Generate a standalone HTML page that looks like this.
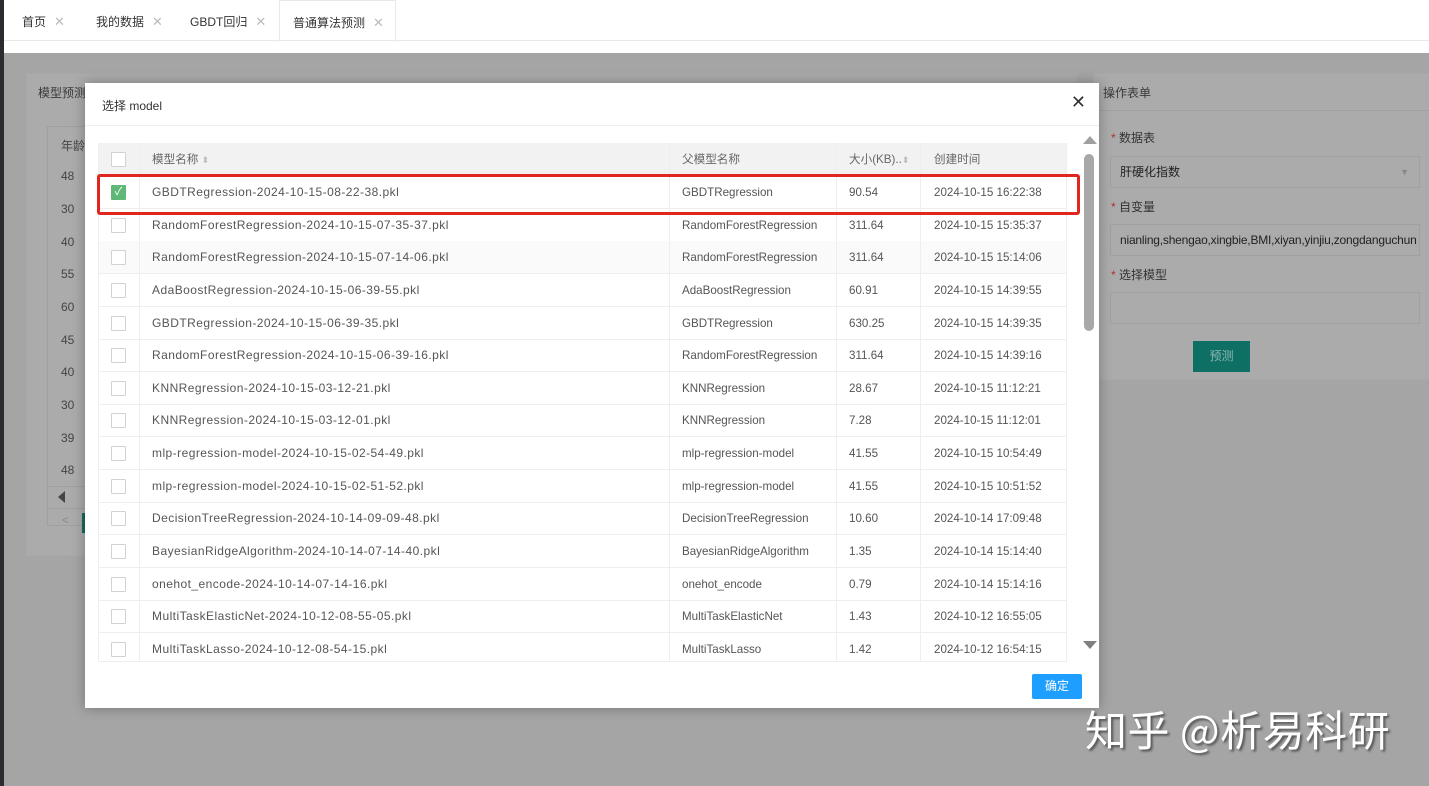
<!DOCTYPE html>
<html><head><meta charset="utf-8"><style>
*{margin:0;padding:0;box-sizing:border-box}
body{width:1429px;height:786px;overflow:hidden;position:relative;background:#a5a5a5;font-family:"Liberation Sans","Noto Sans CJK SC",sans-serif;font-size:12px;color:#666}
.a{position:absolute}
.top{left:0;top:0;width:1429px;height:53px;background:#fff}
.tabs{left:0;top:0;width:1429px;height:41px;border-bottom:1px solid #e8e8e8;background:#fff}
.tab{position:absolute;top:0;height:41px;line-height:44px;font-size:12px;color:#333}
.tab i{font-style:normal;color:#bbb;margin-left:8px;font-size:13px}
.strip{left:0;top:0;width:5px;height:786px;background:#2b2b30}
.card{background:#ababab;border:1px solid #a8a8a8}
.dlg{left:85px;top:83px;width:1014px;height:625px;background:#fff;box-shadow:0 0 12px rgba(0,0,0,.3)}
.row{position:absolute;left:98px;width:969px;height:33px;border-bottom:1px solid #eee;font-size:11.6px;color:#555}
.row span{position:absolute;top:0;line-height:33px;white-space:nowrap}
.row span.n{letter-spacing:0.45px;font-size:12px}
.cb{position:absolute;left:13px;top:9px;width:15px;height:15px;border:1px solid #d2d2d2;background:#fff;border-radius:1px}
.vl{position:absolute;top:143px;width:1px;height:519px;background:#eee}
</style></head><body>
<div class="a top"></div>
<div class="a tabs">
<div class="tab" style="left:22px">首页<i>✕</i></div>
<div class="tab" style="left:96px">我的数据<i>✕</i></div>
<div class="tab" style="left:190px">GBDT回归<i>✕</i></div>
<div class="tab" style="left:279px;width:117px;border:1px solid #e8e8e8;border-bottom:1px solid #fff;padding-left:13px;height:42px">普通算法预测<i>✕</i></div>
</div>
<div class="a" style="left:5px;top:53px;width:1424px;height:733px;background:#a5a5a5"></div>
<div class="a card" style="left:26px;top:73px;width:1051px;height:483px">
<div class="a" style="left:11px;top:10px;color:#3a3a3a">模型预测</div>
<div class="a" style="left:20px;top:52px;width:60px;height:400px;border:1px solid #9f9f9f;color:#444">
<div style="position:absolute;left:13px;top:10px">年龄</div>
<div style="position:absolute;left:13px;top:42px">48</div><div style="position:absolute;left:13px;top:75px">30</div><div style="position:absolute;left:13px;top:108px">40</div><div style="position:absolute;left:13px;top:140px">55</div><div style="position:absolute;left:13px;top:173px">60</div><div style="position:absolute;left:13px;top:206px">45</div><div style="position:absolute;left:13px;top:238px">40</div><div style="position:absolute;left:13px;top:271px">30</div><div style="position:absolute;left:13px;top:304px">39</div><div style="position:absolute;left:13px;top:336px">48</div>
<div style="position:absolute;left:0;top:359px;width:58px;height:1px;background:#9f9f9f"></div>
<div style="position:absolute;left:10px;top:364px;width:0;height:0;border-top:6px solid transparent;border-bottom:6px solid transparent;border-right:7px solid #444"></div>
<div style="position:absolute;left:0;top:381px;width:58px;height:1px;background:#9f9f9f"></div>
<div style="position:absolute;left:14px;top:386px;color:#888">&lt;</div>
<div style="position:absolute;left:34px;top:386px;width:6px;height:20px;background:#1a6a5e"></div>
</div>
</div>
<div class="a card" style="left:1093px;top:73px;width:340px;height:307px">
<div class="a" style="left:9px;top:10px;color:#3a3a3a">操作表单</div>
<div class="a" style="left:0;top:36px;width:340px;height:1px;background:#a0a0a0"></div>
<div class="a" style="left:17px;top:55px;color:#333"><span style="color:#b03030">*</span> 数据表</div>
<div class="a" style="left:16px;top:82px;width:310px;height:32px;border:1px solid #a0a0a0;line-height:30px;padding-left:9px;color:#222">肝硬化指数<span style="position:absolute;right:10px;top:0;color:#888;font-size:9px">▼</span></div>
<div class="a" style="left:17px;top:124px;color:#333"><span style="color:#b03030">*</span> 自变量</div>
<div class="a" style="left:16px;top:150px;width:310px;height:32px;border:1px solid #a0a0a0;line-height:30px;padding-left:9px;color:#222;overflow:hidden;white-space:nowrap;letter-spacing:-0.2px">nianling,shengao,xingbie,BMI,xiyan,yinjiu,zongdanguchun</div>
<div class="a" style="left:17px;top:192px;color:#333"><span style="color:#b03030">*</span> 选择模型</div>
<div class="a" style="left:16px;top:218px;width:310px;height:32px;border:1px solid #a0a0a0"></div>
<div class="a" style="left:99px;top:267px;width:57px;height:31px;background:#0e6f64;color:#8fb9b2;text-align:center;line-height:31px">预测</div>
</div>
<div class="a" style="left:0;top:645px;width:4px;height:55px;background:#18a892"></div>
<div class="a strip" style="width:4px"></div>

<div class="a dlg">
<div class="a" style="left:17px;top:14px;font-size:12px;color:#333">选择 model</div>
<div class="a" style="right:13px;top:9px;font-size:18px;color:#333">✕</div>
<div class="a" style="left:0;top:42px;width:1014px;height:1px;background:#eee"></div>
<div class="a" style="left:998px;top:53px;width:0;height:0;border-left:7px solid transparent;border-right:7px solid transparent;border-bottom:8px solid #a0a0a0"></div>
<div class="a" style="left:999px;top:71px;width:10px;height:177px;background:#a8a8a8;border-radius:5px"></div>
<div class="a" style="left:998px;top:558px;width:0;height:0;border-left:7px solid transparent;border-right:7px solid transparent;border-top:8px solid #808080"></div>
<div class="a" style="left:947px;top:591px;width:50px;height:25px;background:#1e9fff;color:#fff;text-align:center;line-height:25px;border-radius:2px">确定</div>
</div>

<div class="a" style="left:98px;top:143px;width:969px;height:33px;background:#f2f2f2;border:1px solid #eee"></div>
<div class="row" style="top:143px;background:#f2f2f2;color:#666"><div class="cb"></div><span style="left:54px">模型名称 <span style="position:relative;color:#bbb;font-size:9px;left:0">⬍</span></span><span style="left:584px">父模型名称</span><span style="left:751px">大小(KB)..<span style="position:relative;color:#bbb;font-size:9px">⬍</span></span><span style="left:836px">创建时间</span></div>
<div id="rows"></div>
<script>
var d=[["GBDTRegression-2024-10-15-08-22-38.pkl","GBDTRegression","90.54","2024-10-15 16:22:38"],
["RandomForestRegression-2024-10-15-07-35-37.pkl","RandomForestRegression","311.64","2024-10-15 15:35:37"],
["RandomForestRegression-2024-10-15-07-14-06.pkl","RandomForestRegression","311.64","2024-10-15 15:14:06"],
["AdaBoostRegression-2024-10-15-06-39-55.pkl","AdaBoostRegression","60.91","2024-10-15 14:39:55"],
["GBDTRegression-2024-10-15-06-39-35.pkl","GBDTRegression","630.25","2024-10-15 14:39:35"],
["RandomForestRegression-2024-10-15-06-39-16.pkl","RandomForestRegression","311.64","2024-10-15 14:39:16"],
["KNNRegression-2024-10-15-03-12-21.pkl","KNNRegression","28.67","2024-10-15 11:12:21"],
["KNNRegression-2024-10-15-03-12-01.pkl","KNNRegression","7.28","2024-10-15 11:12:01"],
["mlp-regression-model-2024-10-15-02-54-49.pkl","mlp-regression-model","41.55","2024-10-15 10:54:49"],
["mlp-regression-model-2024-10-15-02-51-52.pkl","mlp-regression-model","41.55","2024-10-15 10:51:52"],
["DecisionTreeRegression-2024-10-14-09-09-48.pkl","DecisionTreeRegression","10.60","2024-10-14 17:09:48"],
["BayesianRidgeAlgorithm-2024-10-14-07-14-40.pkl","BayesianRidgeAlgorithm","1.35","2024-10-14 15:14:40"],
["onehot_encode-2024-10-14-07-14-16.pkl","onehot_encode","0.79","2024-10-14 15:14:16"],
["MultiTaskElasticNet-2024-10-12-08-55-05.pkl","MultiTaskElasticNet","1.43","2024-10-12 16:55:05"],
["MultiTaskLasso-2024-10-12-08-54-15.pkl","MultiTaskLasso","1.42","2024-10-12 16:54:15"]];
var h="";
d.forEach(function(r,i){var t=176+i*32.64;
var cb=i==0?'<div class="cb" style="background:#5fb878;border-color:#5fb878;color:#fff;font-size:11px;line-height:13px;text-align:center">✓</div>':'<div class="cb"></div>';
h+='<div class="row" style="top:'+t+'px;height:'+(i==14?(662-t):33)+'px;'+(i==2?'background:#fafafa':'')+'">'+cb+'<span class="n" style="left:54px">'+r[0]+'</span><span style="left:584px">'+r[1]+'</span><span style="left:751px">'+r[2]+'</span><span style="left:836px">'+r[3]+'</span></div>';});
document.getElementById("rows").innerHTML=h;
</script>
<div class="vl" style="left:98px"></div><div class="vl" style="left:139px"></div><div class="vl" style="left:669px"></div><div class="vl" style="left:836px"></div><div class="vl" style="left:920px"></div><div class="vl" style="left:1066px"></div>
<div class="a" style="left:97px;top:174px;width:983px;height:41px;border:3px solid #e0261f;border-radius:3px"></div>
<div class="a" style="left:1085px;top:698px;font-size:42px;color:#fff;text-shadow:2px 2px 2px #555;font-family:'Noto Sans CJK SC',sans-serif;white-space:nowrap;letter-spacing:0.5px">知乎 @析易科研</div>
</body></html>
